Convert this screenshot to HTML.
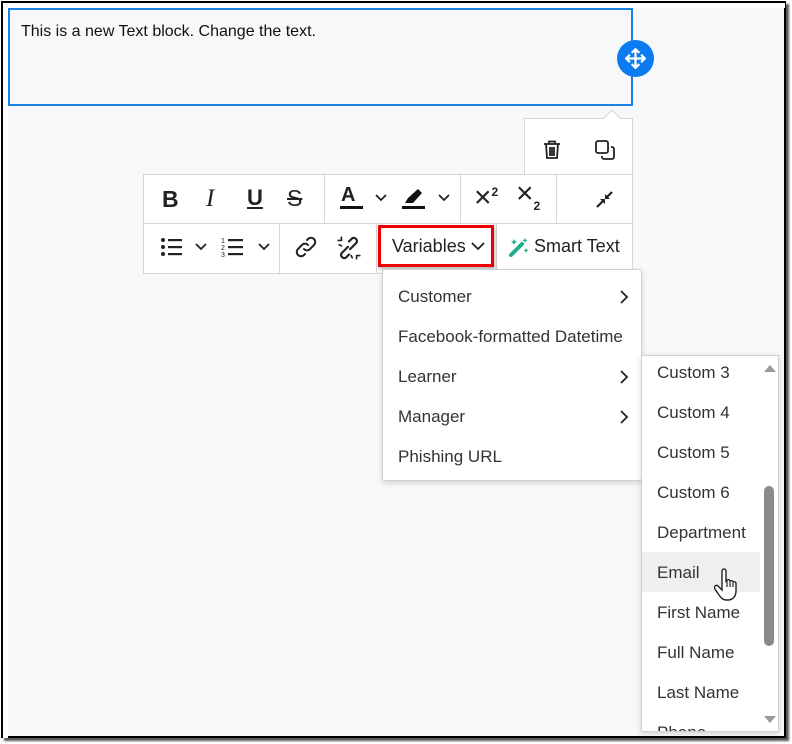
<!DOCTYPE html>
<html><head><style>
*{box-sizing:border-box;margin:0;padding:0}
body{width:792px;height:744px;background:#fff;position:relative;overflow:hidden;font-family:"Liberation Sans",sans-serif;color:#222}
.frame{position:absolute;left:1px;top:1px;width:785px;height:737px;border:2px solid #000;background:#f7f8fa;box-shadow:3px 3px 2px #555}
.abs{position:absolute}
.tb{position:absolute;background:#fff;border:1px solid #d6d6d6}
.menu{position:absolute;background:#fff;border:1px solid #d0d0d0;box-shadow:0 2px 6px rgba(0,0,0,.15);font-size:17px;color:#333}
.mi{position:absolute;left:15px}
.chev{position:absolute}
</style></head><body>
<div class="frame"></div>
<div class="abs" style="left:3px;top:3px;width:5px;height:735px;background:#fff"></div>
<div class="abs" style="left:3px;top:3px;width:782px;height:5px;background:#fff"></div>
<div class="abs" style="left:8px;top:8px;width:625px;height:98px;border:2px solid #1a7fe6;background:#f7f8fa"></div>
<div class="abs" style="left:21px;top:23px;font-size:16px;color:#111">This is a new Text block. Change the text.</div>
<div class="abs" style="left:617px;top:40px;width:37px;height:37px;border-radius:50%;background:#0a7cf0"></div>
<svg class="abs" style="left:623px;top:46px" width="25" height="25" viewBox="0 0 24 24" fill="none" stroke="#fff" stroke-width="2.2" stroke-linecap="round" stroke-linejoin="round"><path d="M12 3v18M3 12h18M9 6l3-3 3 3M9 18l3 3 3-3M6 9l-3 3 3 3M18 9l3 3-3 3"/></svg>

<div class="tb" style="left:524px;top:118px;width:109px;height:57px;border-bottom:none"></div>
<svg class="abs" style="left:602px;top:109px" width="20" height="11"><path d="M1 10L10 1L19 10" fill="#fff" stroke="#d6d6d6"/></svg>
<svg class="abs" style="left:541px;top:139px" width="22" height="22" viewBox="0 0 22 22" fill="none" stroke="#222" stroke-width="1.8"><path d="M3 5h16M8 5V2.5h6V5M5 5l1 14h10l1-14M9 8v9M11 8v9M13 8v9"/></svg>
<svg class="abs" style="left:593px;top:138px" width="24" height="24" viewBox="0 0 24 24" fill="none" stroke="#222" stroke-width="1.8"><rect x="3" y="3" width="12" height="12" rx="2"/><path d="M18 9h1a2 2 0 0 1 2 2v8a2 2 0 0 1-2 2h-8a2 2 0 0 1-2-2v-1"/></svg>

<div class="tb" style="left:143px;top:174px;width:490px;height:100px"></div>
<div class="abs" style="left:143px;top:223px;width:490px;height:1px;background:#d6d6d6"></div>
<div class="abs" style="left:324px;top:174px;width:1px;height:49px;background:#d6d6d6"></div>
<div class="abs" style="left:460px;top:174px;width:1px;height:49px;background:#d6d6d6"></div>
<div class="abs" style="left:556px;top:174px;width:1px;height:49px;background:#d6d6d6"></div>
<div class="abs" style="left:279px;top:223px;width:1px;height:50px;background:#d6d6d6"></div>
<div class="abs" style="left:376px;top:223px;width:1px;height:50px;background:#d6d6d6"></div>
<div class="abs" style="left:496px;top:223px;width:1px;height:50px;background:#d6d6d6"></div>

<div class="abs" style="left:162px;top:186px;font-size:23px;font-weight:bold">B</div>
<div class="abs" style="left:206px;top:185px;font-size:25px;font-family:'Liberation Serif',serif;font-style:italic">I</div>
<div class="abs" style="left:247px;top:185px;font-size:22px;font-weight:bold;text-decoration:underline">U</div>
<div class="abs" style="left:287px;top:185px;font-size:23px;text-decoration:line-through">S</div>
<div class="abs" style="left:341px;top:184px;font-size:20px;font-weight:bold">A</div>
<div class="abs" style="left:340px;top:206px;width:23px;height:3px;background:#111"></div>
<svg class="abs" style="left:374px;top:193px" width="14" height="10"><path d="M2 2l5 5 5-5" fill="none" stroke="#222" stroke-width="1.8"/></svg>
<svg class="abs" style="left:402px;top:187px" width="24" height="18" viewBox="0 0 24 18"><path d="M3 16l3-5 10-9 4 4-9 10z" fill="#111"/></svg>
<div class="abs" style="left:402px;top:206px;width:23px;height:3px;background:#111"></div>
<svg class="abs" style="left:437px;top:193px" width="14" height="10"><path d="M2 2l5 5 5-5" fill="none" stroke="#222" stroke-width="1.8"/></svg>
<div class="abs" style="left:474px;top:181px;font-size:30px">×<sup style="font-size:12px;font-weight:bold">2</sup></div>
<div class="abs" style="left:516px;top:177px;font-size:30px">×<sub style="font-size:12px;font-weight:bold">2</sub></div>
<svg class="abs" style="left:595px;top:189px" width="20" height="20" viewBox="0 0 20 20" stroke="#222" stroke-width="2.2" fill="#222"><path d="M17 3l-6 6M2 18l6-6"/><path d="M10 5v5h5z M5 10h5v5z" stroke="none"/></svg>

<svg class="abs" style="left:160px;top:236px" width="24" height="22" viewBox="0 0 24 22" fill="#222"><circle cx="3" cy="4" r="2"/><circle cx="3" cy="11" r="2"/><circle cx="3" cy="18" r="2"/><rect x="8" y="3" width="14" height="2.2"/><rect x="8" y="10" width="14" height="2.2"/><rect x="8" y="17" width="14" height="2.2"/></svg>
<svg class="abs" style="left:194px;top:242px" width="14" height="10"><path d="M2 2l5 5 5-5" fill="none" stroke="#222" stroke-width="1.8"/></svg>
<svg class="abs" style="left:221px;top:236px" width="24" height="22" viewBox="0 0 24 22" fill="#222"><text x="0" y="7" font-size="7" font-family="Liberation Sans">1</text><text x="0" y="14" font-size="7" font-family="Liberation Sans">2</text><text x="0" y="21" font-size="7" font-family="Liberation Sans">3</text><rect x="7" y="3" width="15" height="2.2"/><rect x="7" y="10" width="15" height="2.2"/><rect x="7" y="17" width="15" height="2.2"/></svg>
<svg class="abs" style="left:257px;top:242px" width="14" height="10"><path d="M2 2l5 5 5-5" fill="none" stroke="#222" stroke-width="1.8"/></svg>
<svg class="abs" style="left:294px;top:235px" width="24" height="24" viewBox="0 0 24 24" fill="none" stroke="#222" stroke-width="2" stroke-linecap="round"><path d="M10 14a4 4 0 0 0 6 0l4-4a4 4 0 0 0-6-6l-1 1"/><path d="M14 10a4 4 0 0 0-6 0l-4 4a4 4 0 0 0 6 6l1-1"/></svg>
<svg class="abs" style="left:336px;top:235px" width="26" height="26" viewBox="0 0 24 24" fill="none" stroke="#222" stroke-width="2" stroke-linecap="round"><path d="M13 13l3-3 3-3a3 3 0 0 0-4-4l-3 3"/><path d="M11 11l-3 3-3 3a3 3 0 0 0 4 4l3-3"/><path d="M5 2v3M2 5h3M19 22v-3M22 19h-3M3 9l2 1M15 21l-1-2" stroke-width="1.5"/></svg>

<div class="abs" style="left:378px;top:225px;width:116px;height:42px;border:3px solid #e00;box-shadow:1px 2px 3px rgba(0,0,0,.3)"></div>
<div class="abs" style="left:392px;top:236px;font-size:18px;color:#222">Variables</div>
<svg class="abs" style="left:470px;top:241px" width="16" height="10"><path d="M2 2l6 6 6-6" fill="none" stroke="#222" stroke-width="1.8"/></svg>
<svg class="abs" style="left:508px;top:237px" width="22" height="20" viewBox="0 0 22 20"><path d="M3 18L14 7" stroke="#1fae8c" stroke-width="4" stroke-linecap="round"/><path d="M6 2l1 2 2 1-2 1-1 2-1-2-2-1 2-1zM17 1l.8 1.6 1.6.8-1.6.8L17 6l-.8-1.8-1.6-.8 1.6-.8zM18 11l.8 1.6 1.6.8-1.6.8L18 16l-.8-1.8-1.6-.8 1.6-.8z" fill="#1fae8c"/></svg>
<div class="abs" style="left:534px;top:236px;font-size:18px;color:#222">Smart Text</div>

<div class="menu" style="left:382px;top:269px;width:260px;height:212px;border-radius:3px">
<div class="mi" style="top:17px">Customer</div>
<div class="mi" style="top:57px">Facebook-formatted Datetime</div>
<div class="mi" style="top:97px">Learner</div>
<div class="mi" style="top:137px">Manager</div>
<div class="mi" style="top:177px">Phishing URL</div>
<svg class="chev" style="left:236px;top:19px" width="10" height="16"><path d="M2 2l6 6-6 6" fill="none" stroke="#222" stroke-width="1.8"/></svg>
<svg class="chev" style="left:236px;top:99px" width="10" height="16"><path d="M2 2l6 6-6 6" fill="none" stroke="#222" stroke-width="1.8"/></svg>
<svg class="chev" style="left:236px;top:139px" width="10" height="16"><path d="M2 2l6 6-6 6" fill="none" stroke="#222" stroke-width="1.8"/></svg>
</div>

<div class="menu" style="left:641px;top:355px;width:138px;height:377px;overflow:hidden">
<div class="abs" style="left:0;top:196px;width:118px;height:40px;background:#efefef"></div>
<div class="mi" style="top:7px">Custom 3</div>
<div class="mi" style="top:47px">Custom 4</div>
<div class="mi" style="top:87px">Custom 5</div>
<div class="mi" style="top:127px">Custom 6</div>
<div class="mi" style="top:167px">Department</div>
<div class="mi" style="top:207px">Email</div>
<div class="mi" style="top:247px">First Name</div>
<div class="mi" style="top:287px">Full Name</div>
<div class="mi" style="top:327px">Last Name</div>
<div class="mi" style="top:367px">Phone</div>
<svg class="abs" style="left:122px;top:8px" width="12" height="8"><path d="M0 8L6 1L12 8z" fill="#999"/></svg>
<svg class="abs" style="left:122px;top:360px" width="12" height="8"><path d="M0 0L6 7L12 0z" fill="#999"/></svg>
<div class="abs" style="left:122px;top:130px;width:10px;height:160px;border-radius:5px;background:#8a8a8a"></div>
</div>
<svg class="abs" style="left:714px;top:568px" width="28" height="34" viewBox="0 0 28 34"><path d="M8 3a2 2 0 0 1 4 0v10l1-1a2 2 0 0 1 3 1a2 2 0 0 1 3 1a2 2 0 0 1 3 1v8c0 5-3 9-8 9h-2c-3 0-5-2-7-5l-4-6a2 2 0 0 1 3-3l4 4z" fill="#fff" stroke="#222" stroke-width="1.4"/><path d="M13 13v6M16 14v5M19 15v4" stroke="#222" stroke-width="1.2"/></svg>
</body></html>
